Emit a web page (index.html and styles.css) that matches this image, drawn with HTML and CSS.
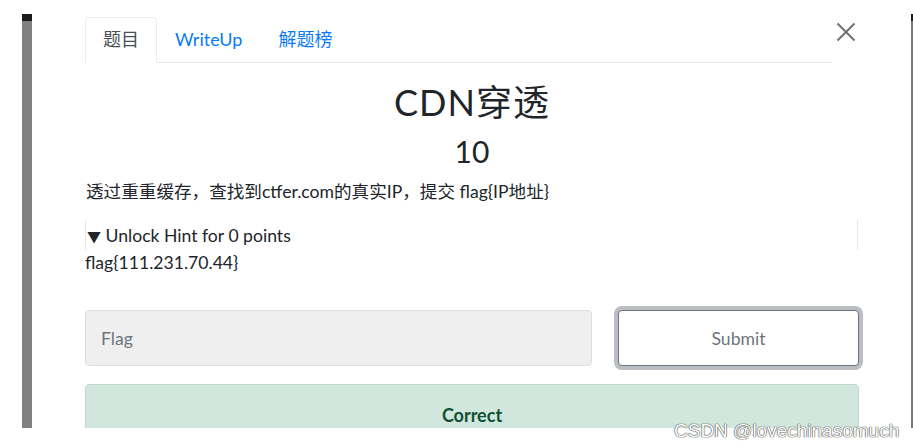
FILE: index.html
```html
<!DOCTYPE html>
<html lang="zh-CN">
<head>
    <meta charset="UTF-8">
    <meta name="viewport" content="width=device-width, initial-scale=1.0">
    <title>CDN穿透</title>
    <link rel="stylesheet" href="styles.css">
</head>
<body>
    <div class="frame">
        <div class="edge edge-left"></div>

        <div class="modal">
            <div class="modal-head">
                <ul class="tabs">
                    <li class="tab active">题目</li>
                    <li class="tab">WriteUp</li>
                    <li class="tab">解题榜</li>
                </ul>
                <button class="close" aria-label="Close">
                    <svg width="20" height="20" viewBox="0 0 20 20">
                        <path d="M1.5 1.5 L18.5 18.5 M18.5 1.5 L1.5 18.5" stroke="#707070" stroke-width="2" fill="none"/>
                    </svg>
                </button>
            </div>

            <div class="modal-body">
                <h1 class="challenge-name">CDN穿透</h1>
                <h2 class="challenge-value">10</h2>
                <p class="description">透过重重缓存，查找到ctfer.com的真实IP，提交 flag{IP地址}</p>

                <div class="hint">
                    <div class="hint-summary"><span class="caret">▼</span> Unlock Hint for 0 points</div>
                    <div class="hint-body">flag{111.231.70.44}</div>
                </div>

                <form class="submit-row">
                    <input class="flag-input" type="text" placeholder="Flag">
                    <button class="submit-btn" type="button">Submit</button>
                </form>

                <div class="alert-success">Correct</div>
            </div>
        </div>

        <div class="edge edge-right"></div>
    </div>

    <div class="watermark">CSDN @lovechinasomuch</div>
</body>
</html>
```

FILE: styles.css
```css
body {
    margin: 0;
    background: #fff;
    font-family: Lato, "Noto Sans CJK SC", sans-serif;
    color: #212529;
}

.frame {
    display: flex;
    margin: 14px 0 0 22px;
    width: 891px;
    height: 414px;
    overflow: hidden;
}

.edge {
    flex: none;
    background: linear-gradient(#1c1c1c 7px, #808080 7px);
}

.edge-left {
    width: 10px;
}

.edge-right {
    width: 2px;
    margin-left: 1px;
    background: linear-gradient(#1c1c1c 7px, #7a7a7a 7px);
}

.modal {
    flex: 1;
    background: #fff;
    padding: 3px 51px 0 53px;
}

.modal-head {
    display: flex;
    align-items: flex-start;
}

.tabs {
    display: flex;
    list-style: none;
    margin: 0;
    padding: 0;
    width: 747px;
    border-bottom: 1px solid #e6e8ea;
    flex: none;
}

.tab {
    padding: 8px 17px 9px;
    font-size: 18px;
    line-height: 27px;
    color: #0a7bf5;
    border: 1px solid transparent;
    border-top-left-radius: 4px;
    border-top-right-radius: 4px;
    margin-bottom: -1px;
}

.tab.active {
    color: #495057;
    border-color: #e9ecef #e9ecef #fff;
    background: #fff;
}

.close {
    margin: 5px 0 0 4px;
    padding: 0;
    width: 20px;
    height: 20px;
    border: none;
    background: none;
}

.close svg {
    display: block;
}

.challenge-name {
    margin: 17px 0 0;
    font-size: 36px;
    line-height: 44px;
    font-weight: 400;
    text-align: center;
    letter-spacing: 1px;
}

.challenge-value {
    margin: 10px 0 0;
    font-size: 30px;
    line-height: 34px;
    font-weight: 400;
    text-align: center;
}

.description {
    margin: 11px 0 0 1px;
    font-size: 17.6px;
    line-height: 26px;
}

.hint {
    margin-top: 15px;
    font-size: 17.6px;
    line-height: 26px;
}

.hint-summary {
    padding: 3px 0 0 1px;
    border-left: 1px solid #e6e6e6;
    border-right: 1px solid #e6e6e6;
    margin-right: 1px;
}

.caret {
    font-size: 14px;
}

.submit-row {
    display: flex;
    gap: 26px;
    margin-top: 34px;
}

.flag-input {
    flex: 1;
    height: 56px;
    box-sizing: border-box;
    padding: 0 15px;
    background: #efefef;
    border: 1px solid #dcdfe2;
    border-radius: 4px;
    font-family: Lato, sans-serif;
    font-size: 17.6px;
    color: #495057;
}

.flag-input::placeholder {
    color: #6c757d;
}

.submit-btn {
    width: 241px;
    height: 56px;
    background: #fff;
    border: 1px solid #6c757d;
    border-radius: 4px;
    box-shadow: 0 0 0 4px #babec2;
    font-family: Lato, sans-serif;
    font-size: 17.6px;
    color: #6c757d;
}

.alert-success {
    margin-top: 18px;
    padding: 18px 0 20px;
    background: #d1e7dd;
    border: 1px solid #badbcc;
    border-radius: 4px;
    color: #0f5132;
    font-weight: 700;
    font-size: 18px;
    line-height: 24px;
    text-align: center;
}

.watermark {
    position: absolute;
    left: 674px;
    top: 420px;
    font-family: "Liberation Sans", Arial, sans-serif;
    font-size: 19px;
    color: #fff;
    text-shadow: 0 0 1px #444, 0 0 1px #444, 0 0 1px #666;
}
```
